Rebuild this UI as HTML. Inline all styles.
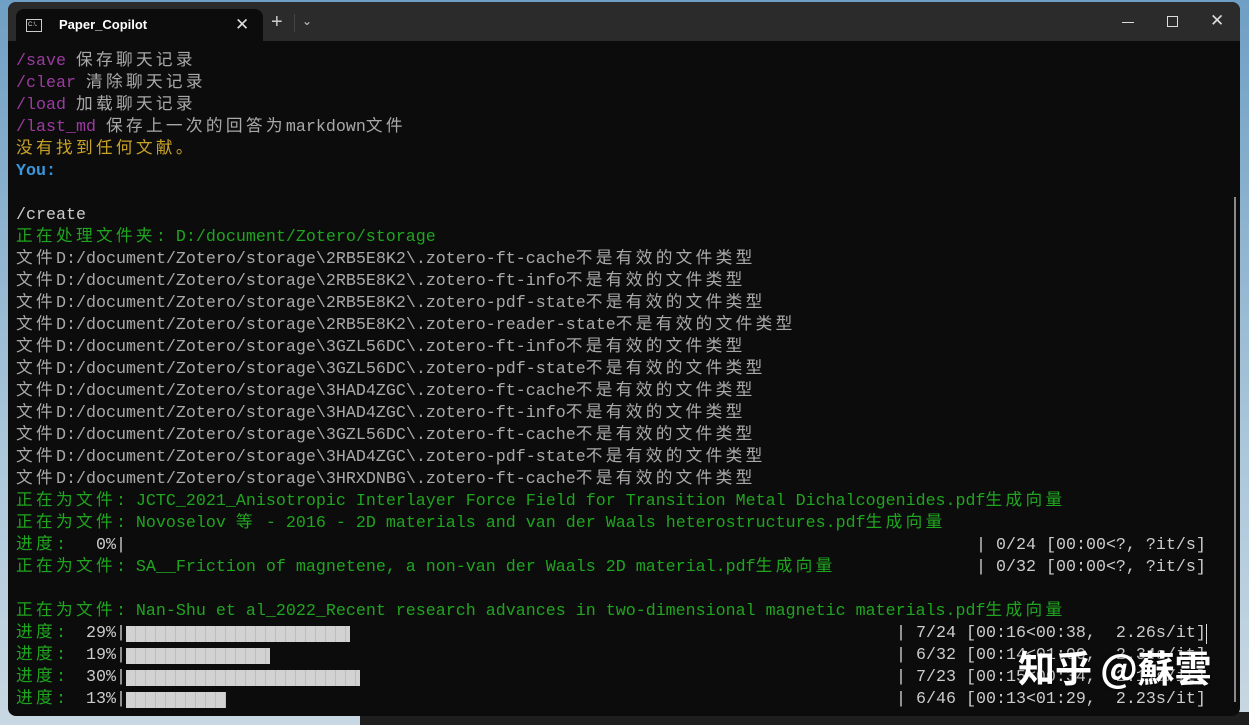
<!DOCTYPE html>
<html><head><meta charset="utf-8"><style>
html,body{margin:0;padding:0;width:1249px;height:725px;overflow:hidden;background:#8fb3cf;}
body{position:relative;font-family:"Liberation Mono","Noto Sans CJK SC",monospace;}
#bgl{position:absolute;left:0;top:0;width:1249px;height:725px;background:linear-gradient(180deg,#6f9fc4 0%,#a9c6da 60%,#c9d8e2 100%);}
#bgr{position:absolute;left:360px;top:712px;width:889px;height:13px;background:#1e1e1e;}
#win{position:absolute;left:8px;top:2px;width:1232px;height:714px;background:#0c0c0c;border-radius:8px;overflow:hidden;}
#tb{position:absolute;left:0;top:0;width:1232px;height:39px;background:#2b2b2b;}
#tab{position:absolute;left:8px;top:7px;width:247px;height:32px;background:#0c0c0c;border-radius:8px 8px 0 0;}
#tab .ic{position:absolute;left:10px;top:10px;width:14px;height:11px;border:1px solid #ccc;font-size:6px;color:#ddd;line-height:10px;text-indent:1px;font-family:"Liberation Sans",sans-serif;}
#tab .t{position:absolute;left:43px;top:8px;font:13px "Liberation Sans",sans-serif;color:#fff;font-weight:bold;}
#tab .x{position:absolute;left:219px;top:6px;color:#ddd;font:17px "Liberation Sans",sans-serif;}
.tbi{position:absolute;color:#ccc;font-family:"Liberation Sans",sans-serif;}
#term{position:absolute;left:8px;top:49px;color:#a9a9a9;font-size:16.67px;line-height:22px;}
.l{height:22px;position:relative;white-space:pre;}
i{font-style:normal;letter-spacing:3.33px;}
.p{color:#9b3aa0}.y{color:#c9a227}.b{color:#3a96dd;font-weight:bold}.g{color:#1fa51f}.w{color:#cccccc}
.r{position:absolute;top:0;color:#cccccc}
.bar{position:absolute;left:110px;top:3px;height:16px;background:repeating-linear-gradient(90deg,#d2d2d2 0,#d2d2d2 9px,#bdbdbd 9px,#bdbdbd 10px);}
#sb{position:absolute;left:1226px;top:195px;width:2px;height:505px;background:#8a8a8a;}
#wm{position:absolute;left:1018px;top:642px;font:600 37px "Noto Sans CJK SC","Liberation Sans",sans-serif;color:#fff;white-space:nowrap;text-shadow:0 0 3px rgba(0,0,0,.6);line-height:48px;}
</style></head><body>
<div id="bgl"></div><div id="bgr"></div>
<div id="win">
<div id="tb">
<div id="tab"><div class="ic">C:\.</div><div class="t">Paper_Copilot</div><div class="x">✕</div></div>
<div class="tbi" style="left:263px;top:9px;font-size:20px;">+</div>
<div style="position:absolute;left:286px;top:12px;width:1px;height:18px;background:#444"></div>
<div class="tbi" style="left:294px;top:12px;font-size:12px;">&#8964;</div>
<div style="position:absolute;left:1114px;top:20px;width:12px;height:1px;background:#ddd"></div>
<div style="position:absolute;left:1159px;top:14px;width:9px;height:9px;border:1px solid #ddd"></div>
<div class="tbi" style="left:1202px;top:9px;font-size:17px;color:#ddd">✕</div>
</div>
<div id="term"><div class="l"><span class="p">/save</span> <i>保存聊天记录</i></div><div class="l"><span class="p">/clear</span> <i>清除聊天记录</i></div><div class="l"><span class="p">/load</span> <i>加载聊天记录</i></div><div class="l"><span class="p">/last_md</span> <i>保存上一次的回答为</i>markdown<i>文件</i></div><div class="l y"><i>没有找到任何文献。</i></div><div class="l b">You:</div><div class="l"></div><div class="l w">/create</div><div class="l g"><i>正在处理文件夹</i>: D:/document/Zotero/storage</div><div class="l"><i>文件</i>D:/document/Zotero/storage\2RB5E8K2\.zotero-ft-cache<i>不是有效的文件类型</i></div><div class="l"><i>文件</i>D:/document/Zotero/storage\2RB5E8K2\.zotero-ft-info<i>不是有效的文件类型</i></div><div class="l"><i>文件</i>D:/document/Zotero/storage\2RB5E8K2\.zotero-pdf-state<i>不是有效的文件类型</i></div><div class="l"><i>文件</i>D:/document/Zotero/storage\2RB5E8K2\.zotero-reader-state<i>不是有效的文件类型</i></div><div class="l"><i>文件</i>D:/document/Zotero/storage\3GZL56DC\.zotero-ft-info<i>不是有效的文件类型</i></div><div class="l"><i>文件</i>D:/document/Zotero/storage\3GZL56DC\.zotero-pdf-state<i>不是有效的文件类型</i></div><div class="l"><i>文件</i>D:/document/Zotero/storage\3HAD4ZGC\.zotero-ft-cache<i>不是有效的文件类型</i></div><div class="l"><i>文件</i>D:/document/Zotero/storage\3HAD4ZGC\.zotero-ft-info<i>不是有效的文件类型</i></div><div class="l"><i>文件</i>D:/document/Zotero/storage\3GZL56DC\.zotero-ft-cache<i>不是有效的文件类型</i></div><div class="l"><i>文件</i>D:/document/Zotero/storage\3HAD4ZGC\.zotero-pdf-state<i>不是有效的文件类型</i></div><div class="l"><i>文件</i>D:/document/Zotero/storage\3HRXDNBG\.zotero-ft-cache<i>不是有效的文件类型</i></div><div class="l g"><i>正在为文件</i>: JCTC_2021_Anisotropic Interlayer Force Field for Transition Metal Dichalcogenides.pdf<i>生成向量</i></div><div class="l g"><i>正在为文件</i>: Novoselov <i>等</i> - 2016 - 2D materials and van der Waals heterostructures.pdf<i>生成向量</i></div><div class="l"><span class="g"><i>进度</i>:</span><span class="w">   0%|</span><span class="r" style="left:960px">| 0/24 [00:00&lt;?, ?it/s]</span></div><div class="l"><span class="g"><i>正在为文件</i>: SA__Friction of magnetene, a non-van der Waals 2D material.pdf<i>生成向量</i></span><span class="r" style="left:960px">| 0/32 [00:00&lt;?, ?it/s]</span></div><div class="l"></div><div class="l g"><i>正在为文件</i>: Nan-Shu et al_2022_Recent research advances in two-dimensional magnetic materials.pdf<i>生成向量</i></div><div class="l"><span class="g"><i>进度</i>:</span><span class="w">  29%|</span><span class="bar" style="width:224px"></span><span class="r" style="left:880px">| 7/24 [00:16&lt;00:38,  2.26s/it]</span><span style="position:absolute;left:1190px;top:1px;width:1px;height:20px;background:#ddd"></span></div><div class="l"><span class="g"><i>进度</i>:</span><span class="w">  19%|</span><span class="bar" style="width:144px"></span><span class="r" style="left:880px">| 6/32 [00:14&lt;01:00,  2.34s/it]</span></div><div class="l"><span class="g"><i>进度</i>:</span><span class="w">  30%|</span><span class="bar" style="width:234px"></span><span class="r" style="left:880px">| 7/23 [00:15&lt;00:34,  2.11s/it]</span></div><div class="l"><span class="g"><i>进度</i>:</span><span class="w">  13%|</span><span class="bar" style="width:100px"></span><span class="r" style="left:880px">| 6/46 [00:13&lt;01:29,  2.23s/it]</span></div></div>
<div id="sb"></div>
</div>
<div id="wm">知乎 @蘇雲</div>
</body></html>
